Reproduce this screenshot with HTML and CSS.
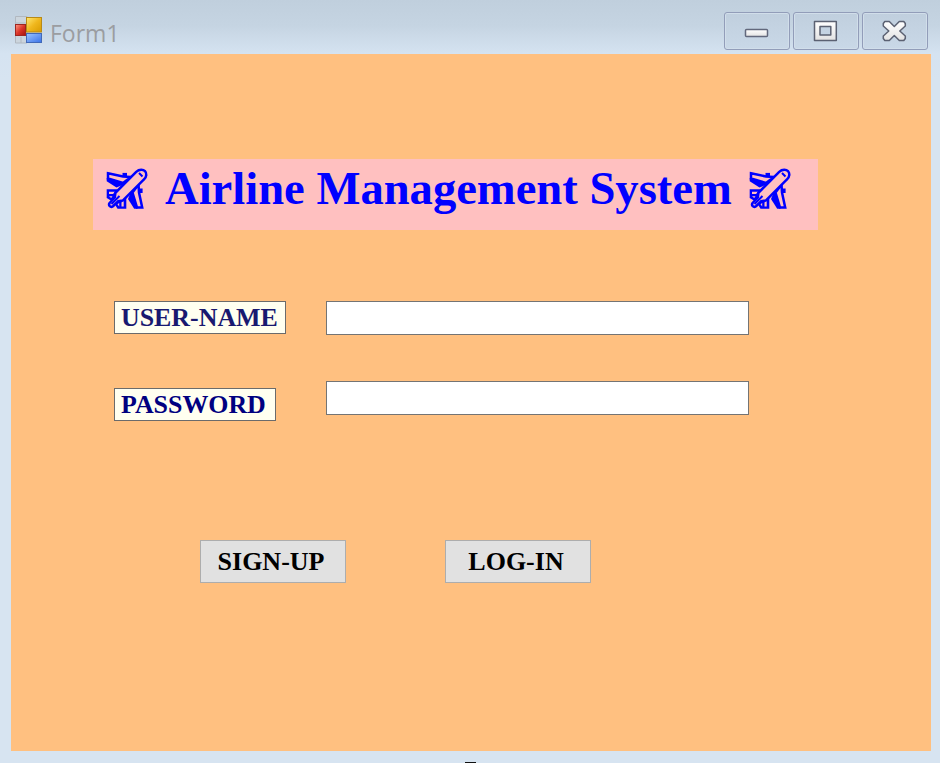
FILE: index.html
```html
<!DOCTYPE html>
<html lang="en">
<head>
<meta charset="utf-8">
<title>Form1</title>
<link rel="stylesheet" href="styles.css">
</head>
<body>
<svg class="defs" width="0" height="0">
  <defs>
    <linearGradient id="gold" x2="1" y2="1"><stop stop-color="#ffe873"/><stop offset=".5" stop-color="#f0b71d"/><stop offset="1" stop-color="#d89b00"/></linearGradient>
    <linearGradient id="red" x2="1" y2="1"><stop stop-color="#ff9a85"/><stop offset=".5" stop-color="#dc3528"/><stop offset="1" stop-color="#a31310"/></linearGradient>
    <linearGradient id="blue" x2="1" y2="1"><stop stop-color="#9cc4ff"/><stop offset="1" stop-color="#3a72e8"/></linearGradient>
    <linearGradient id="glyph" x2="0" y2="1"><stop stop-color="#fff"/><stop offset="1" stop-color="#e2e2e2"/></linearGradient>
    <g id="wing">
      <path d="M1.700 11 L1.700 14.300 L11.500 20.500 L20 17 L20 9 Z" fill="#00f"/>
      <path d="M3 6.300 L18 9.500 L26 10 L18 16 L3 11.500 Z" fill="#ffc0c0" stroke="#00f" stroke-width="2.500"/>
      <path d="M17.500 7.500 H22" stroke="#00f" stroke-width="3.200"/>
      <path d="M1.700 22.200 H12.500 V29 L7.500 34.500 L1.700 31 Z" fill="#00f"/>
      <path d="M4 24.800 H10 L8 27 H4 Z M4 29.300 H7.500 L6.200 31 Z" fill="#ffc0c0"/>
    </g>
    <symbol id="plane" viewBox="0 0 44 44">
      <use href="#wing"/>
      <use href="#wing" transform="matrix(0 -1 -1 0 43.500 43.500)"/>
      <path d="M31.200 4.800 C34.500 1.800 38.500 2.600 40 4.100 C41.800 5.900 42 10 38.700 12.700 L18 33.400 L13.200 34.200 L8 39.200 C5.500 41 3 38.500 4.600 36 L9.800 30.500 L10.400 25.800 Z" fill="#ffc0c0" stroke="#00f" stroke-width="2.500"/>
      <path d="M6.500 37 L14.500 29 M34 6 L37.500 9.500" fill="none" stroke="#00f" stroke-width="2"/>
    </symbol>
  </defs>
</svg>
<div class="window">
  <header class="titlebar">
    <svg class="app-icon" width="30" height="30" viewBox="0 0 30 30">
      <path d="M1.500 1.500 H13 V28 H1.500 Z M1.500 8 H13 M7 22 V28" fill="#ccd5dd" stroke="#b1b8c0"/>
      <rect x="12.500" y="2.500" width="15" height="14.500" fill="url(#gold)" stroke="#b88a17"/>
      <rect x="1.500" y="9.500" width="10" height="11" fill="url(#red)" stroke="#9e2620"/>
      <rect x="12.500" y="18.500" width="15" height="9" fill="url(#blue)" stroke="#4169b8"/>
    </svg>
    <span class="caption">Form1</span>
    <div class="controls">
      <button class="control" aria-label="Minimize"><svg width="26" height="22" viewBox="0 0 26 22"><rect x="1.500" y="9.500" width="22" height="7" rx="1" fill="url(#glyph)" stroke="#62687c" stroke-width="1.500"/></svg></button>
      <button class="control" aria-label="Maximize"><svg width="26" height="22" viewBox="0 0 26 22"><path fill-rule="evenodd" d="M1.500 1.500 H23.300 V20.500 H1.500 Z M7 6.500 V15 H17.800 V6.500 Z" fill="url(#glyph)" stroke="#5b6172" stroke-width="1.500" stroke-linejoin="round"/></svg></button>
      <button class="control" aria-label="Close"><svg width="26" height="22" viewBox="0 0 26 22"><path transform="translate(-.7 0)" d="M3.500 1.500 H8 L13 6.500 L18 1.500 H22.500 L24 3.500 V6 L18.500 11 L24 16 V18.500 L22.500 20.500 H18 L13 15.500 L8 20.500 H3.500 L2 18.500 V16 L7.500 11 L2 6 V3.500 Z" fill="url(#glyph)" stroke="#5b6172" stroke-width="1.500" stroke-linejoin="round"/></svg></button>
    </div>
  </header>
  <main class="form">
    <h1 class="banner">
      <svg class="plane" width="44" height="44"><use href="#plane"/></svg>
      <span class="banner-text">Airline Management System</span>
      <svg class="plane" width="44" height="44"><use href="#plane"/></svg>
    </h1>
    <div class="row row-user">
      <label class="label label-user" for="user">USER-NAME</label>
      <input class="field" id="user" type="text">
    </div>
    <div class="row row-pass">
      <label class="label label-pass" for="pass">PASSWORD</label>
      <input class="field" id="pass" type="password">
    </div>
    <div class="actions">
      <button class="action">SIGN-UP</button>
      <button class="action">LOG-IN</button>
    </div>
  </main>
  <footer class="edge"><span class="mark"></span></footer>
</div>
</body>
</html>
```
FILE: styles.css
```css
* { box-sizing: border-box; }
body { margin: 0; overflow: hidden; }
.defs { display: block; }
.window {
  width: 940px;
  height: 763px;
  display: flex;
  flex-direction: column;
  padding: 0 9px 0 11px;
  background: linear-gradient(#c0cfdd 0, #c5d4e2 25px, #d5e3f1 54px, #d7e4f1 80px);
}
.titlebar {
  height: 54px;
  flex: none;
  display: flex;
  align-items: flex-start;
  padding: 12px 3px 0 3px;
}
.app-icon { margin-top: 3px; }
.caption {
  margin: 5px 0 0 6px;
  font: 23px/32px "Open Sans", "Noto Sans", sans-serif;
  color: #9b9da1;
}
.controls { display: flex; gap: 3px; margin-left: auto; }
.control {
  width: 66px;
  height: 38px;
  padding: 0;
  display: flex;
  align-items: center;
  justify-content: center;
  border: 1.5px solid #929db9;
  border-radius: 3px;
  background: linear-gradient(#c0cfde, #c9d8e7);
  box-shadow: inset 0 0 0 1px #d1deea;
}
.form {
  width: 920px;
  height: 697px;
  flex: none;
  padding-top: 105px;
  background: #ffc080;
}
.banner {
  width: 725px;
  height: 71px;
  margin: 0 0 0 82px;
  padding: 8px 0 0 12px;
  display: flex;
  align-items: flex-start;
  background: #ffc0c0;
  color: #00f;
}
.plane { flex: none; }
.banner-text {
  width: 599px;
  padding-left: 16px;
  font: bold 46.6px/43px "Liberation Serif", serif;
  white-space: nowrap;
}
.row { display: flex; margin-left: 103px; }
.row-user { margin-top: 71px; }
.row-pass { margin-top: 46px; }
.label {
  height: 33px;
  padding-left: 6px;
  border: 1px solid #6b6b6b;
  background: #fffff0;
  font: bold 25.9px/32px "Liberation Serif", serif;
  white-space: nowrap;
}
.label-user { width: 172px; color: #191970; }
.label-pass { width: 162px; margin-top: 7px; color: #000080; }
.field {
  width: 423px;
  height: 34px;
  margin-left: 40px;
  padding: 0 4px;
  border: 1px solid #747474;
  background: #fff;
}
.label-pass + .field { margin-left: 50px; }
.actions { display: flex; gap: 99px; margin: 119px 0 0 189px; }
.action {
  width: 146px;
  height: 43px;
  padding: 1px 4px 0 0;
  border: 1px solid #adadad;
  background: #e1e1e1;
  font: bold 26px/40px "Liberation Serif", serif;
  color: #000;
}
.edge { height: 12px; padding-top: 11px; }
.mark { display: block; width: 11px; height: 1px; margin-left: 454px; background: #111; }
```
